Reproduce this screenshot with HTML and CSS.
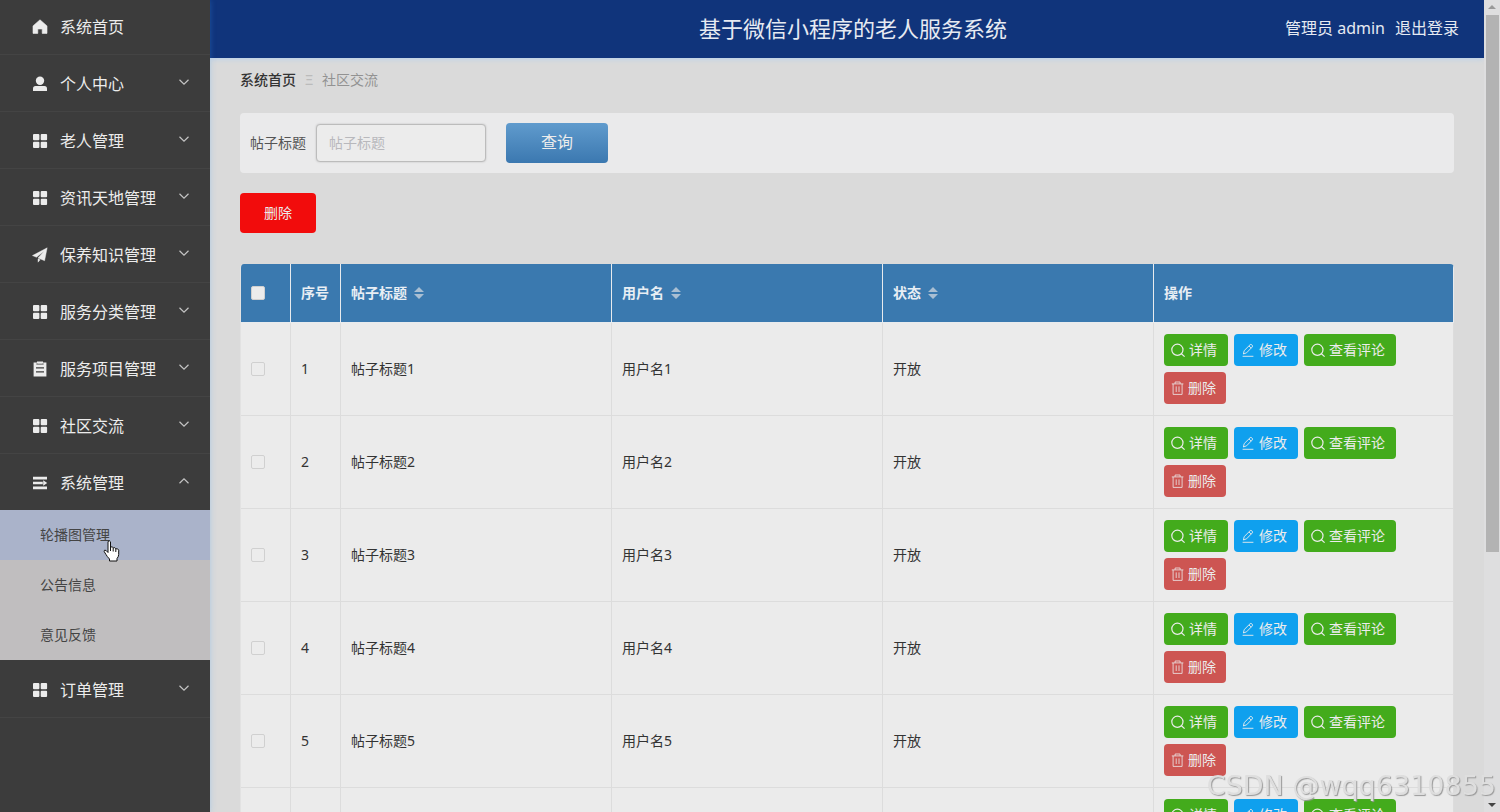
FILE: index.html
```html
<!DOCTYPE html>
<html lang="zh-CN">
<head>
    <meta charset="UTF-8">
    <meta name="viewport" content="width=device-width, initial-scale=1.0">
    <title>基于微信小程序的老人服务系统</title>
    <link rel="stylesheet" href="styles.css">
</head>
<body>

<!-- icon set -->
<svg class="sprite" aria-hidden="true">
    <symbol id="i-home" viewBox="0 0 16 16"><path d="M8 .8 15 6.9V14.4H10.2V10H5.8V14.4H1V6.9Z" stroke="currentColor" stroke-width=".6" stroke-linejoin="round"/></symbol>
    <symbol id="i-user" viewBox="0 0 16 16"><circle cx="8" cy="4.8" r="4.2"/><path d="M1 15V12.6Q1 10 3.6 10H12.4Q15 10 15 12.6V15Z"/></symbol>
    <symbol id="i-grid" viewBox="0 0 16 16"><rect x="1" y="1" width="6.4" height="6.2" rx="1"/><rect x="8.7" y="1" width="6.4" height="6.2" rx="1"/><rect x="1" y="8.8" width="6.4" height="6.2" rx="1"/><rect x="8.7" y="8.8" width="6.4" height="6.2" rx="1"/></symbol>
    <symbol id="i-plane" viewBox="0 0 16 16"><path d="M15.2.8.4 8.6 4.5 10.3 12 4.2 6 11 12.6 13.7ZM6 11.8V15.2L8.2 12.8Z" stroke="currentColor" stroke-width=".4"/></symbol>
    <symbol id="i-order" viewBox="0 0 16 16"><path fill-rule="evenodd" d="M5 1.4V.6H11V1.4H14.4V15.4H1.6V1.4ZM4.4 2.4V3.6H11.6V2.4H10.4V2.8H5.6V2.4ZM4 6.2V7.4H12V6.2ZM4 10.2V11.4H12V10.2Z"/></symbol>
    <symbol id="i-fold" viewBox="0 0 16 16"><path d="M1 1.8H15V4.6H1ZM1 6.7H10.8V9.3H1ZM1 11.4H15V14.2H1ZM11.2 5.2 15.2 8 11.2 10.8Z"/></symbol>
    <symbol id="i-down" viewBox="0 0 12 12"><path d="M1.5 3.8 6 8.2 10.5 3.8" fill="none" stroke="currentColor" stroke-width="1.2"/></symbol>
    <symbol id="i-up" viewBox="0 0 12 12"><path d="M1.5 8.2 6 3.8 10.5 8.2" fill="none" stroke="currentColor" stroke-width="1.2"/></symbol>
    <symbol id="i-search" viewBox="0 0 14 14"><g fill="none" stroke="currentColor" stroke-width="1.2"><circle cx="6.4" cy="6.8" r="5.6"/><path d="M10.4 10.8 13.6 13.6"/></g></symbol>
    <symbol id="i-edit" viewBox="0 0 14 14"><g fill="none" stroke="currentColor" stroke-width=".9"><path d="M1.6 13.3H12.4M2.4 11 3.2 7.6 9 1.8Q9.8 1 10.8 1.8L11.2 2.2Q12 3.1 11.2 4L5.6 9.8Z"/><path d="M8 3 10.2 5.1"/></g></symbol>
    <symbol id="i-trash" viewBox="0 0 14 14"><g fill="none" stroke="currentColor" stroke-width=".8"><path d="M.8 2.9H12.4M2.1 3V13.4H11.1V3M4.1 2.8V1H9.1V2.8M5.2 5.4V11M8 5.4V11"/></g></symbol>
    <symbol id="i-sort" viewBox="0 0 10 12"><path d="M0 5 5 0 10 5ZM0 7 5 12 10 7Z"/></symbol>
</svg>

<nav class="sidebar">
    <ul class="menu">
        <li><a href="#" class="item first"><svg class="icon"><use href="#i-home"/></svg>系统首页</a></li>
        <li><a href="#" class="item"><svg class="icon"><use href="#i-user"/></svg>个人中心<svg class="arrow"><use href="#i-down"/></svg></a></li>
        <li><a href="#" class="item"><svg class="icon"><use href="#i-grid"/></svg>老人管理<svg class="arrow"><use href="#i-down"/></svg></a></li>
        <li><a href="#" class="item"><svg class="icon"><use href="#i-grid"/></svg>资讯天地管理<svg class="arrow"><use href="#i-down"/></svg></a></li>
        <li><a href="#" class="item"><svg class="icon"><use href="#i-plane"/></svg>保养知识管理<svg class="arrow"><use href="#i-down"/></svg></a></li>
        <li><a href="#" class="item"><svg class="icon"><use href="#i-grid"/></svg>服务分类管理<svg class="arrow"><use href="#i-down"/></svg></a></li>
        <li><a href="#" class="item"><svg class="icon"><use href="#i-order"/></svg>服务项目管理<svg class="arrow"><use href="#i-down"/></svg></a></li>
        <li><a href="#" class="item"><svg class="icon"><use href="#i-grid"/></svg>社区交流<svg class="arrow"><use href="#i-down"/></svg></a></li>
        <li>
            <a href="#" class="item open"><svg class="icon"><use href="#i-fold"/></svg>系统管理<svg class="arrow"><use href="#i-up"/></svg></a>
            <ul class="submenu">
                <li><a href="#" class="active">轮播图管理<svg class="pointer" viewBox="0 0 17 22"><path d="M5 1.5Q6.5 0 7.5 1.8V7.2Q9.3 6 10.2 7.8 12 7 12.8 8.8 14.8 8 15.7 10.2V14.5Q15.5 17 14 18.5V21H6.5V19Q4 16.5 3 14.5L1.2 11.6Q.8 9.5 3 10.4L5 12.5Z" fill="#fff" stroke="#111" stroke-linejoin="round"/><path d="M7.5 7V11M10.2 8V11.5M12.8 9V12" fill="none" stroke="#111"/></svg></a></li>
                <li><a href="#">公告信息</a></li>
                <li><a href="#">意见反馈</a></li>
            </ul>
        </li>
        <li><a href="#" class="item"><svg class="icon"><use href="#i-grid"/></svg>订单管理<svg class="arrow"><use href="#i-down"/></svg></a></li>
    </ul>
</nav>

<div class="page">
    <header class="header">
        <h1>基于微信小程序的老人服务系统</h1>
        <div class="account"><span>管理员 admin</span><a href="#">退出登录</a></div>
    </header>

    <main class="content">
        <div class="breadcrumb"><a href="#">系统首页</a><span class="sep">Ξ</span><span>社区交流</span></div>

        <form class="search">
            <label for="title">帖子标题</label>
            <input type="text" id="title" placeholder="帖子标题">
            <button type="button">查询</button>
        </form>

        <button type="button" class="remove">删除</button>

        <div class="table-box">
            <table>
                <colgroup><col class="narrow"><col class="narrow"><col><col><col><col class="actions-col"></colgroup>
                <thead>
                    <tr>
                        <th><input type="checkbox" aria-label="全选"></th>
                        <th>序号</th>
                        <th>帖子标题<svg class="sort"><use href="#i-sort"/></svg></th>
                        <th>用户名<svg class="sort"><use href="#i-sort"/></svg></th>
                        <th>状态<svg class="sort"><use href="#i-sort"/></svg></th>
                        <th>操作</th>
                    </tr>
                </thead>
                <tbody id="rows"></tbody>
            </table>
        </div>
    </main>
</div>

<div class="scrollbar"><i class="up"></i><i class="thumb"></i><i class="down"></i></div>
<div class="watermark">CSDN @wqq6310855</div>

<script>
    // Posts shown on the first page
    var html = '';
    for (var i = 1; i <= 6; i++) {
        html += '<tr>' +
            '<td><input type="checkbox" aria-label="选择' + i + '"></td>' +
            '<td>' + i + '</td>' +
            '<td>帖子标题' + i + '</td>' +
            '<td>用户名' + i + '</td>' +
            '<td>开放</td>' +
            '<td><div class="actions">' +
            '<button type="button" class="green"><svg><use href="#i-search"/></svg>详情</button>' +
            '<button type="button" class="blue"><svg><use href="#i-edit"/></svg>修改</button>' +
            '<button type="button" class="green"><svg><use href="#i-search"/></svg>查看评论</button>' +
            '<button type="button" class="red"><svg><use href="#i-trash"/></svg>删除</button>' +
            '</div></td></tr>';
    }
    document.getElementById('rows').innerHTML = html;
</script>

</body>
</html>
```
FILE: styles.css
```css
* { box-sizing: border-box; }
body { margin: 0; height: 100vh; display: flex; overflow: hidden; background: #dadada; color: #333; font: 14px/20px "Noto Sans", "Noto Sans CJK SC", sans-serif; }
ul { margin: 0; padding: 0; list-style: none; }
a { color: inherit; text-decoration: none; }
button, input { font: inherit; margin: 0; }
button { border: 0; border-radius: 4px; color: #ececec; cursor: pointer; }
svg { fill: currentColor; flex: none; }
.sprite { position: absolute; width: 0; height: 0; }

/* sidebar */
.sidebar { width: 210px; flex: none; background: #3c3c3c; color: #ececec; box-shadow: 0 0 6px rgba(64, 158, 255, 0.3); z-index: 1; }
.item { display: flex; align-items: center; height: 57px; padding: 2px 20px 0 32px; border-bottom: 1px solid #444; font-size: 16px; }
.item.first { height: 55px; padding-top: 0; }
.item.open { height: 56px; border-bottom: 0; }
.icon { width: 16px; height: 16px; margin-right: 12px; }
.arrow { width: 12px; height: 12px; margin: 0 0 4px auto; color: #c4c4c4; }
.submenu { margin-bottom: 1px; background: #c0bebf; color: #444; }
.submenu a { position: relative; display: block; padding-left: 40px; line-height: 50px; }
.submenu a.active { background: #aab3ca; }
.pointer { position: absolute; left: 103px; top: 30px; width: 17px; height: 22px; }

/* header */
.page { flex: 1; min-width: 0; }
.header { display: grid; grid-template-columns: 1fr auto 1fr; align-items: center; height: 58px; padding: 0 25px 2px 37px; background: #10347b; color: #e6eaf2; box-shadow: 0 0 6px #a9cdf3; }
.header h1 { grid-column: 2; margin: 0; font-size: 22px; font-weight: normal; line-height: 32px; }
.account { display: flex; justify-content: flex-end; gap: 10px; font-size: 16px; }

/* content */
.content { padding: 12px 30px; }
.breadcrumb { display: flex; color: #929292; }
.breadcrumb a { color: #333; font-weight: 500; }
.sep { width: 26px; text-align: center; color: #bbb; }
.search { display: flex; align-items: center; height: 60px; margin-top: 23px; padding: 0 10px; border-radius: 4px; background: #eaeaeb; }
.search label { margin-right: 10px; color: #555; }
.search input { width: 170px; height: 38px; padding: 0 12px 2px; border: 1px solid #bcbcbc; border-radius: 4px; background: #ececec; box-shadow: 0 0 2px #bbb; }
.search input::placeholder { color: #b8b8bc; }
.search button { width: 102px; height: 40px; margin-left: 20px; padding: 0 0 2px; background: linear-gradient(#609bcd, #3b78b0); font-size: 16px; }
.remove { display: block; width: 76px; height: 40px; margin: 20px 0 31px; background: #f20c0c; }

/* table */
.table-box { border-left: 1px solid #e2e2e2; border-radius: 4px; overflow: hidden; }
table { width: 100%; table-layout: fixed; border-collapse: separate; border-spacing: 0; background: #ebebeb; }
.narrow { width: 50px; }
.actions-col { width: 300px; }
th, td { padding: 11px 10px; border: solid #dcdcdc; border-width: 0 1px 1px 0; text-align: left; }
th { height: 59px; padding: 0 10px; border-color: #e8ebee; background: #3a79af; color: #e8eef4; font-weight: bold; }
td { color: #333; }
input[type="checkbox"] { appearance: none; display: block; width: 14px; height: 14px; border: 1px solid #d0d0d0; border-radius: 2px; background: #ececec; }
.sort { width: 10px; height: 12px; margin-left: 7px; vertical-align: -1px; color: #a9bfd3; }
.actions { display: flex; flex-wrap: wrap; gap: 6px; }
.actions button { display: flex; align-items: center; height: 32px; padding: 0 11px 0 7px; }
.actions svg { width: 14px; height: 14px; margin-right: 4px; }
.actions .green { background: #43ab1c; }
.actions .blue { background: #0fa0ee; }
.actions .red { padding-right: 10px; background: #cd5552; }
.actions .red svg { margin-right: 3px; }

/* scrollbar */
.scrollbar { display: flex; flex-direction: column; align-items: center; width: 16px; flex: none; padding: 5px 0; background: #dededf; }
.scrollbar i { border: 4px solid transparent; }
.scrollbar .up { border-top: 0; border-bottom-color: #999; }
.scrollbar .thumb { width: 13px; height: 67%; margin: 6px 0 auto; border: 0; background: #b3b3b3; }
.scrollbar .down { border-bottom: 0; border-top-color: #444; }

.watermark { position: fixed; right: 4px; bottom: 10px; color: #dedede; font: 27px/32px "DejaVu Sans", sans-serif; text-shadow: 1px 1px 1px #999; }
```
